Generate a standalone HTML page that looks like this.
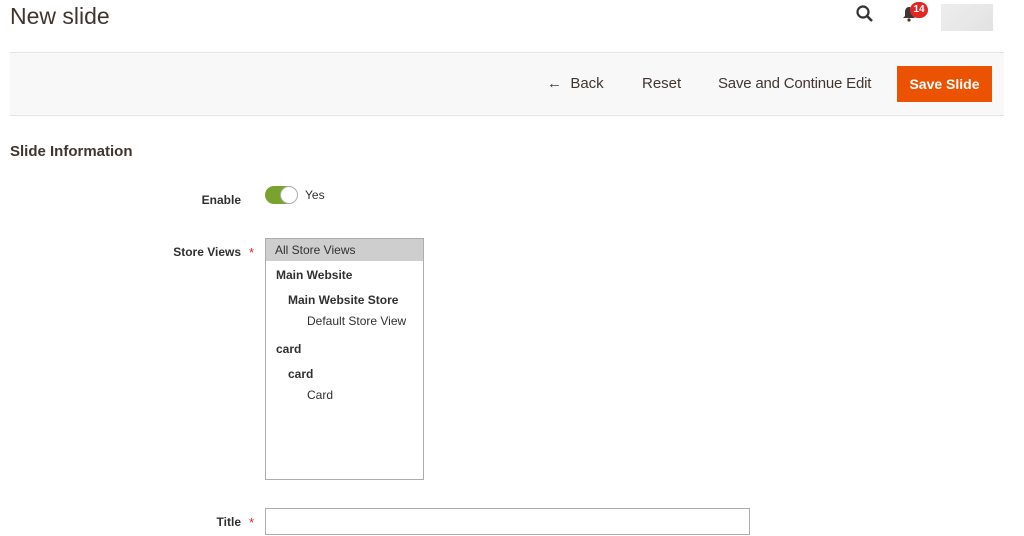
<!DOCTYPE html>
<html><head><style>
body{margin:0;width:1024px;height:536px;background:#fff;font-family:"Liberation Sans",sans-serif;color:#303030;position:relative;overflow:hidden}
.a{position:absolute}
.l{position:absolute;right:783px;font-size:12px;font-weight:bold;text-align:right;white-space:nowrap}
.s{position:absolute;left:249px;color:#e22626;font-size:13px}
</style></head><body>
<div class="a" style="left:10px;top:3px;font-size:23px;color:#41362f">New slide</div>
<svg class="a" style="left:855px;top:4px" width="20" height="20" viewBox="0 0 20 20"><circle cx="8" cy="8" r="5.5" fill="none" stroke="#333" stroke-width="2.2"/><line x1="12" y1="12" x2="17" y2="17" stroke="#333" stroke-width="2.6"/></svg>
<svg class="a" style="left:902px;top:6px" width="14" height="16" viewBox="0 0 14 16"><path d="M7 1C4 1 3 4 3 6v4L1 12h12l-2-2V6c0-2-1-5-4-5z" fill="#41362f"/><circle cx="7" cy="14" r="1.6" fill="#41362f"/></svg>
<div class="a" style="left:910px;top:2px;width:18px;height:16px;border-radius:9px;background:#e22626;color:#fff;font-size:10px;font-weight:bold;text-align:center;line-height:16px">14</div>
<div class="a" style="left:941px;top:4px;width:52px;height:27px;background:linear-gradient(135deg,#eee,#e2e2e2)"></div>
<div class="a" style="left:10px;top:52px;width:994px;height:62px;background:#f8f8f8;border-top:1px solid #e3e3e3;border-bottom:1px solid #e3e3e3"></div>
<div class="a" style="left:547px;top:75px;font-size:15px;color:#41362f">&#8592;&nbsp; Back</div>
<div class="a" style="left:642px;top:75px;font-size:15px;color:#41362f">Reset</div>
<div class="a" style="left:718px;top:75px;font-size:15px;color:#41362f;letter-spacing:-0.2px">Save and Continue Edit</div>
<div class="a" style="left:897px;top:66px;width:95px;height:36px;background:#eb5202;color:#fff;font-size:14px;font-weight:bold;text-align:center;line-height:36px">Save Slide</div>
<div class="a" style="left:10px;top:143px;font-size:15px;font-weight:bold;color:#41362f">Slide Information</div>
<div class="l" style="top:193px">Enable</div>
<div class="a" style="left:265px;top:186px;width:32px;height:18px;border-radius:9px;background:#79a22e"></div>
<div class="a" style="left:280px;top:186px;width:16px;height:16px;border-radius:50%;background:#fff;border:1px solid #adadad"></div>
<div class="a" style="left:305px;top:188px;font-size:12px">Yes</div>
<div class="l" style="top:245px">Store Views</div><div class="s" style="top:245px">*</div>
<div class="a" style="left:265px;top:238px;width:157px;height:240px;border:1px solid #adadad;font-size:12px">
<div style="background:#cecece;height:22px;line-height:22px;padding-left:9px">All Store Views</div>
<div style="position:absolute;left:10px;top:29px;font-weight:bold">Main Website</div>
<div style="position:absolute;left:22px;top:54px;font-weight:bold">Main Website Store</div>
<div style="position:absolute;left:41px;top:75px">Default Store View</div>
<div style="position:absolute;left:10px;top:103px;font-weight:bold">card</div>
<div style="position:absolute;left:22px;top:128px;font-weight:bold">card</div>
<div style="position:absolute;left:41px;top:149px">Card</div>
</div>
<div class="l" style="top:515px">Title</div><div class="s" style="top:515px">*</div>
<div class="a" style="left:265px;top:508px;width:483px;height:25px;border:1px solid #adadad"></div>
</body></html>
